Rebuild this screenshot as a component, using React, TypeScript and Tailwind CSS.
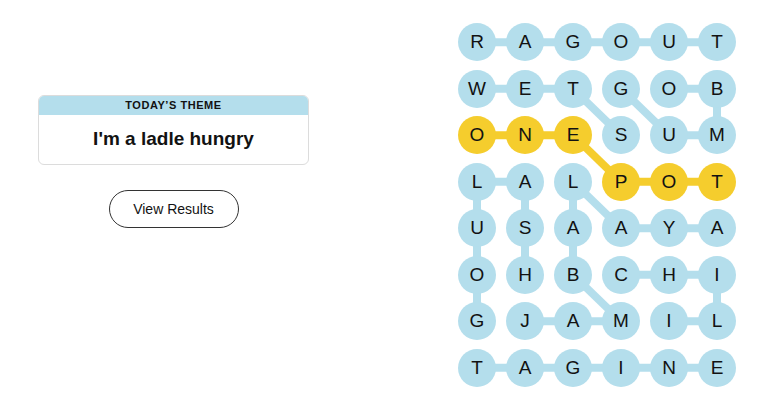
import React from "react";

const BLUE = "#b4deec";
const YELLOW = "#f5cd2d";

const letters = [
  "RAGOUT",
  "WETGOB",
  "ONESUM",
  "LALPOT",
  "USAAYA",
  "OHBCHI",
  "GJAMIL",
  "TAGINE",
];

// each word is a path of [row, col] cells
const words: { path: [number, number][]; spangram?: boolean }[] = [
  { path: [[0, 0], [0, 1], [0, 2], [0, 3], [0, 4], [0, 5]] },
  { path: [[1, 0], [1, 1], [1, 2], [2, 3]] },
  { path: [[1, 3], [2, 4], [2, 5], [1, 5], [1, 4]] },
  { path: [[2, 0], [2, 1], [2, 2], [3, 3], [3, 4], [3, 5]], spangram: true },
  { path: [[6, 0], [5, 0], [4, 0], [3, 0], [3, 1], [4, 1], [5, 1]] },
  { path: [[6, 1], [6, 2], [6, 3], [5, 2], [4, 2], [3, 2], [4, 3], [4, 4], [4, 5]] },
  { path: [[5, 3], [5, 4], [5, 5], [6, 5], [6, 4]] },
  { path: [[7, 0], [7, 1], [7, 2], [7, 3], [7, 4], [7, 5]] },
];

const COL = 48;
const ROW = 46.5;

const cx = (c: number) => COL / 2 + c * COL;
const cy = (r: number) => ROW / 2 + r * ROW;

function isSpangram(r: number, c: number) {
  return words.some((w) => w.spangram && w.path.some(([pr, pc]) => pr === r && pc === c));
}

function Board() {
  return (
    <div className="relative mt-[19px] w-[288px] h-[372px]">
      <svg className="absolute inset-0" width={288} height={372}>
        {words.map((w, i) =>
          w.path.slice(1).map(([r, c], j) => {
            const [pr, pc] = w.path[j];
            return (
              <line
                key={`${i}-${j}`}
                x1={cx(pc)}
                y1={cy(pr)}
                x2={cx(c)}
                y2={cy(r)}
                stroke={w.spangram ? YELLOW : BLUE}
                strokeWidth={8}
              />
            );
          })
        )}
      </svg>
      <div className="relative grid grid-cols-[repeat(6,48px)] grid-rows-[repeat(8,46.5px)]">
        {letters.map((row, r) =>
          row.split("").map((ch, c) => (
            <div key={`${r}-${c}`} className="flex items-center justify-center">
              <div
                className={
                  isSpangram(r, c)
                    ? "flex h-[38px] w-[38px] items-center justify-center rounded-full bg-[#f5cd2d] text-[19px] text-[#121212]"
                    : "flex h-[38px] w-[38px] items-center justify-center rounded-full bg-[#b4deec] text-[19px] text-[#121212]"
                }
              >
                {ch}
              </div>
            </div>
          ))
        )}
      </div>
    </div>
  );
}

export default function App() {
  return (
    <div className="flex h-[409px] w-[767px] overflow-hidden bg-white font-['Liberation_Sans',Arial,sans-serif] text-[#121212]">
      <div className="ml-[38px] flex w-[271px] flex-col items-center pt-[95px]">
        <div className="w-full overflow-hidden rounded-md border border-[#dcdcdc]">
          <div className="flex h-[19px] items-center justify-center bg-[#b4deec] text-[11px] font-bold uppercase tracking-[0.05em]">
            Today’s Theme
          </div>
          <div className="flex h-[49px] items-center justify-center text-[19px] font-bold">
            I'm a ladle hungry
          </div>
        </div>
        <button
          type="button"
          className="mt-[25px] h-[38px] w-[130px] rounded-full border border-[#333] bg-white text-[14px]"
        >
          View Results
        </button>
      </div>
      <div className="ml-[144px]">
        <Board />
      </div>
    </div>
  );
}
